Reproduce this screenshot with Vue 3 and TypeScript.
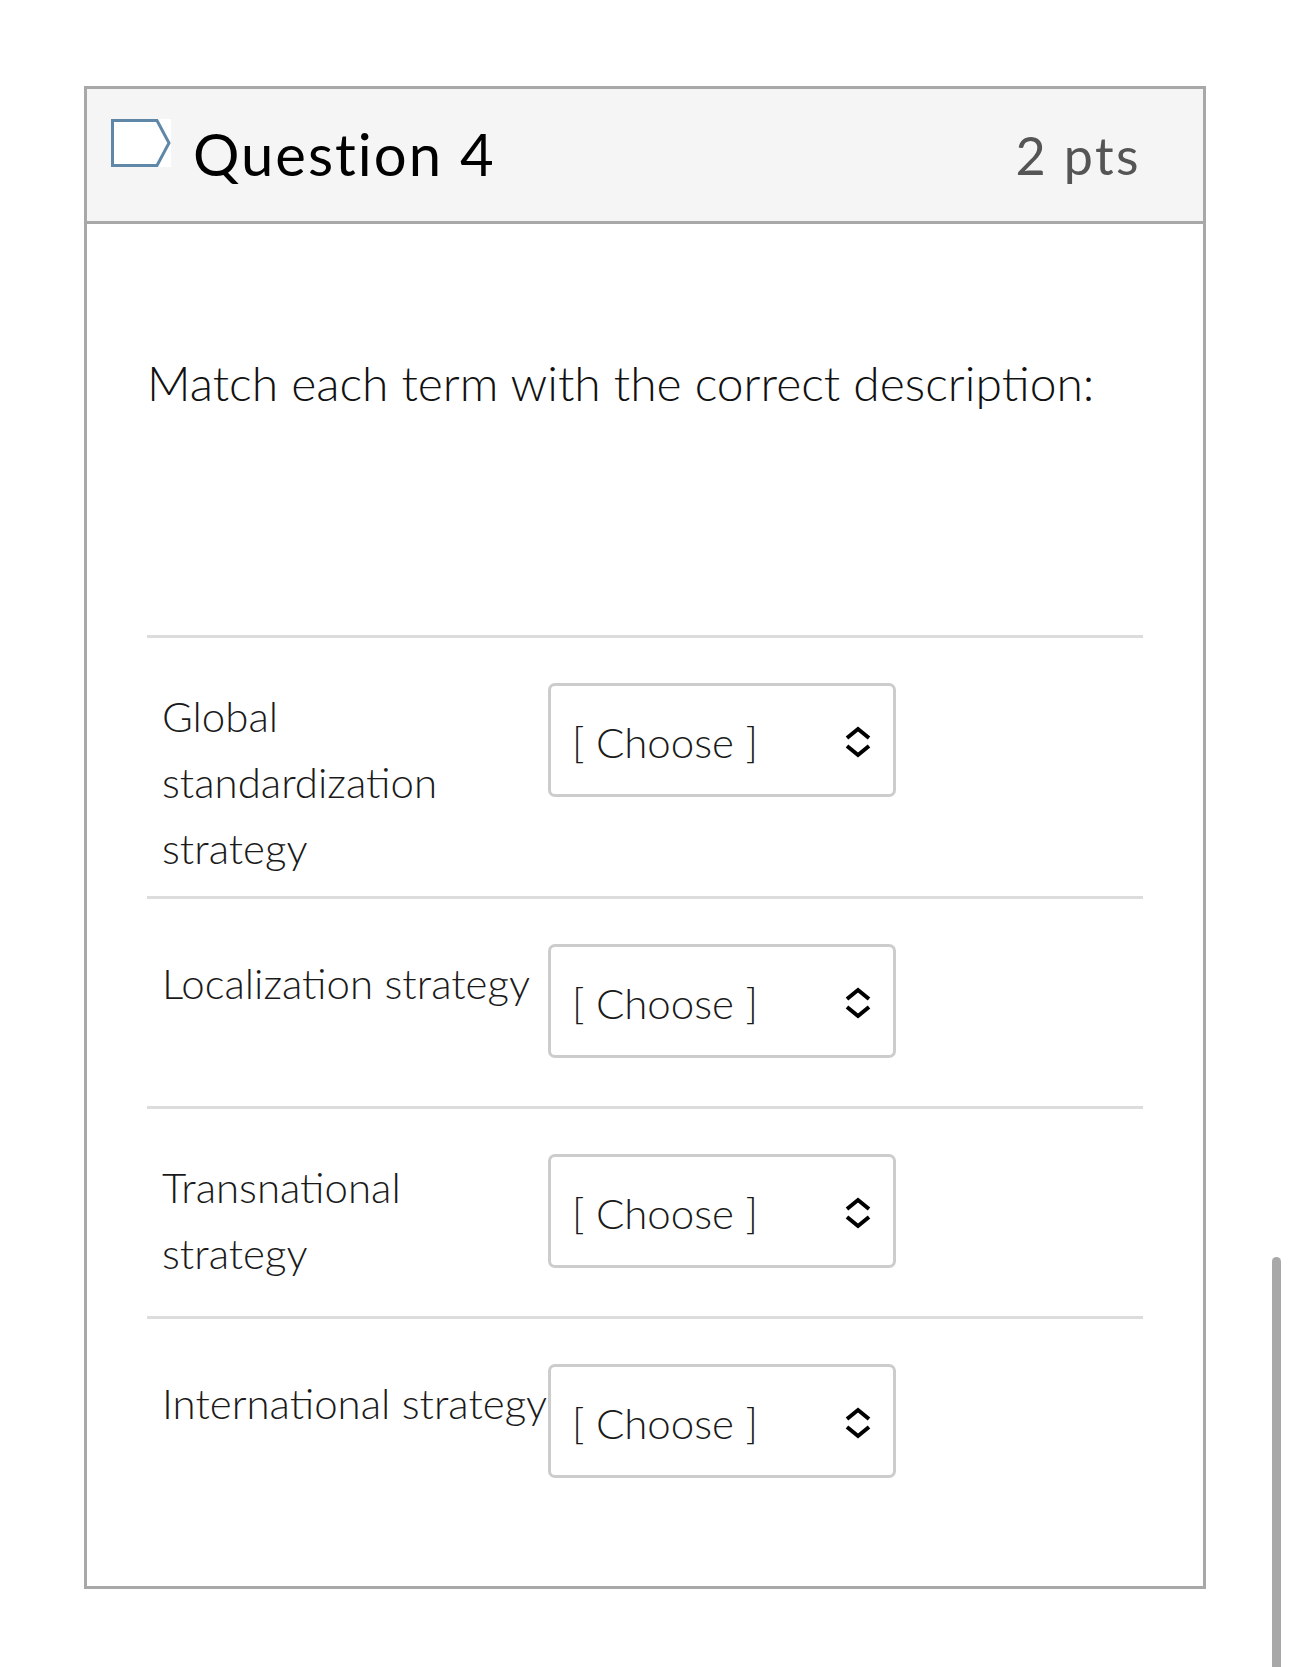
<template>
  <div class="page">
    <div class="question">
      <header class="question-header">
        <svg class="flag" width="60" height="48" viewBox="0 0 60 48">
          <rect width="60" height="48" fill="#fff" />
          <path d="M1.5 1.5H46L58 24L46 46.5H1.5Z" fill="#fff" stroke="#5f88a8" stroke-width="3" />
        </svg>
        <h2 class="question-title">Question 4</h2>
        <span class="question-points">2 pts</span>
      </header>
      <div class="question-body">
        <p class="question-text">Match each term with the correct description:</p>
        <div
          v-for="term in terms"
          :key="term.label"
          class="answer-row"
          :class="{ single: term.single }"
        >
          <div class="answer-label">{{ term.label }}</div>
          <div class="answer-select">
            <span>[ Choose ]</span>
            <svg class="select-arrows" width="28" height="32" viewBox="0 0 28 32">
              <path d="M3 12L14 3L25 12M3 20L14 29L25 20" fill="none" stroke="#000" stroke-width="4" />
            </svg>
          </div>
        </div>
      </div>
    </div>
    <div class="scrollbar" />
  </div>
</template>

<script setup lang="ts">
interface Term {
  label: string
  single?: boolean
}

const terms: Term[] = [
  { label: 'Global standardization strategy' },
  { label: 'Localization strategy', single: true },
  { label: 'Transnational strategy' },
  { label: 'International strategy', single: true },
]
</script>

<style>
html,
body {
  background: #fff;
}
</style>

<style scoped>
.page {
  position: relative;
  height: 1667px;
  padding: 86px 84px 0;
  box-sizing: border-box;
  overflow: hidden;
  font-family: Lato, "Liberation Sans", sans-serif;
}
.question {
  width: 1122px;
  height: 1503px;
  border: 3px solid #a8a8a8;
  box-sizing: border-box;
}
.question-header {
  display: flex;
  align-items: flex-start;
  height: 135px;
  padding: 30px 62px 0 24px;
  border-bottom: 3px solid #a8a8a8;
  box-sizing: border-box;
  background: #f5f5f5;
}
.flag {
  flex: none;
  margin-right: 22px;
}
.question-title {
  margin: 0;
  font-size: 58px;
  font-weight: 400;
  letter-spacing: 2px;
  line-height: 70px;
  color: #000;
}
.question-points {
  margin-left: auto;
  font-size: 52px;
  letter-spacing: 2.4px;
  line-height: 72px;
  color: #555;
}
.question-body {
  padding: 0 60px;
}
.question-text {
  height: 411px;
  margin: 0;
  padding-top: 124px;
  box-sizing: border-box;
  font-size: 48px;
  font-weight: 300;
  line-height: 70px;
  color: #111;
}
.answer-row {
  display: flex;
  align-items: flex-start;
  padding: 45px 15px 0;
  border-top: 3px solid #dcdcdc;
  min-height: 210px;
  box-sizing: border-box;
}
.answer-row:first-of-type {
  min-height: 261px;
}
.answer-label {
  flex: none;
  width: 386px;
  box-sizing: border-box;
  font-size: 42px;
  font-weight: 300;
  line-height: 66px;
  color: #1a1a1a;
}
.answer-row.single .answer-label {
  padding-top: 6px;
  white-space: nowrap;
}
.answer-select {
  display: flex;
  align-items: center;
  justify-content: space-between;
  flex: none;
  width: 348px;
  height: 114px;
  padding: 4px 21px 0 21px;
  border: 3px solid #cccccc;
  border-radius: 7px;
  box-sizing: border-box;
  font-size: 42px;
  font-weight: 300;
  color: #1a1a1a;
}
.select-arrows {
  flex: none;
}
.scrollbar {
  position: absolute;
  top: 1257px;
  bottom: 0;
  left: 1272px;
  width: 9px;
  border-radius: 5px 5px 0 0;
  background: #a8a8a8;
}
</style>
